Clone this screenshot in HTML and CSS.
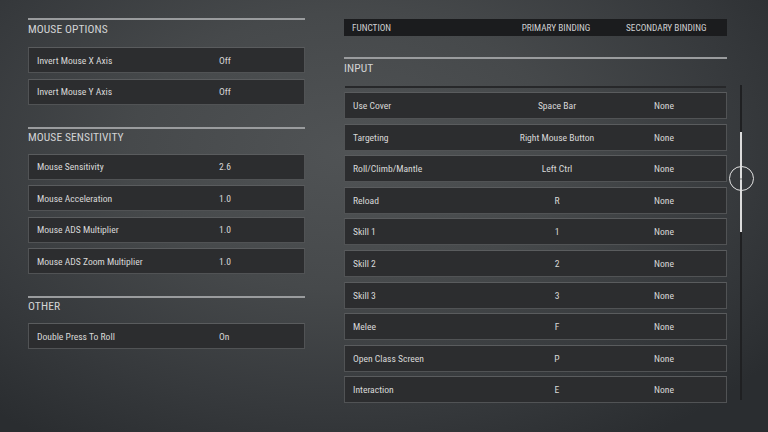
FILE: index.html
```html
<!DOCTYPE html>
<html lang="en">
<head>
<meta charset="utf-8">
<title>Controls</title>
<link rel="stylesheet" href="styles.css">
</head>
<body>
<div class="screen">
  <div class="left">
    <section class="group first">
      <h2 class="group-title">MOUSE OPTIONS</h2>
      <div class="rows">
        <div class="opt"><span>Invert Mouse X Axis</span><span>Off</span></div>
        <div class="opt"><span>Invert Mouse Y Axis</span><span>Off</span></div>
      </div>
    </section>
    <section class="group">
      <h2 class="group-title">MOUSE SENSITIVITY</h2>
      <div class="rows">
        <div class="opt"><span>Mouse Sensitivity</span><span>2.6</span></div>
        <div class="opt"><span>Mouse Acceleration</span><span>1.0</span></div>
        <div class="opt"><span>Mouse ADS Multiplier</span><span>1.0</span></div>
        <div class="opt"><span>Mouse ADS Zoom Multiplier</span><span>1.0</span></div>
      </div>
    </section>
    <section class="group">
      <h2 class="group-title">OTHER</h2>
      <div class="rows">
        <div class="opt"><span>Double Press To Roll</span><span>On</span></div>
      </div>
    </section>
  </div>

  <div class="right">
    <div class="table-head">
      <span class="c1">FUNCTION</span>
      <span class="c2">PRIMARY BINDING</span>
      <span class="c3">SECONDARY BINDING</span>
    </div>
    <section class="group bind-group">
      <h2 class="group-title">INPUT</h2>
      <div class="bind-list">
        <div class="bind"><span class="c1">Use Cover</span><span class="c2">Space Bar</span><span class="c3">None</span></div>
        <div class="bind"><span class="c1">Targeting</span><span class="c2">Right Mouse Button</span><span class="c3">None</span></div>
        <div class="bind"><span class="c1">Roll/Climb/Mantle</span><span class="c2">Left Ctrl</span><span class="c3">None</span></div>
        <div class="bind"><span class="c1">Reload</span><span class="c2">R</span><span class="c3">None</span></div>
        <div class="bind"><span class="c1">Skill 1</span><span class="c2">1</span><span class="c3">None</span></div>
        <div class="bind"><span class="c1">Skill 2</span><span class="c2">2</span><span class="c3">None</span></div>
        <div class="bind"><span class="c1">Skill 3</span><span class="c2">3</span><span class="c3">None</span></div>
        <div class="bind"><span class="c1">Melee</span><span class="c2">F</span><span class="c3">None</span></div>
        <div class="bind"><span class="c1">Open Class Screen</span><span class="c2">P</span><span class="c3">None</span></div>
        <div class="bind"><span class="c1">Interaction</span><span class="c2">E</span><span class="c3">None</span></div>
      </div>
    </section>
  </div>

  <div class="scrollbar">
    <div class="track-top"></div>
    <div class="thumb"></div>
    <div class="track-bottom"></div>
    <div class="knob"><span class="dot"></span></div>
  </div>
</div>
</body>
</html>
```

FILE: styles.css
```css
* { box-sizing: border-box; }

html, body {
  margin: 0;
  padding: 0;
  width: 768px;
  height: 432px;
  overflow: hidden;
}

body {
  font-family: "Liberation Sans Narrow", "Roboto Condensed", "DejaVu Sans Condensed", "Liberation Sans", sans-serif;
  color: #d6d6d6;
  background:
    radial-gradient(ellipse 70% 80% at 45% 35%, #505355 0%, #46494b 40%, #36393c 75%, #2a2d30 100%);
}

.screen {
  display: flex;
  align-items: flex-start;
  padding: 18px 0 0 28px;
  height: 432px;
}

/* ---------- left column ---------- */
.left {
  width: 277px;
  display: flex;
  flex-direction: column;
  gap: 22px;
}

.group {
  border-top: 2px solid #9a9c9e;
}

.group-title {
  margin: 0 0 9px 0;
  font-size: 11.5px;
  font-weight: normal;
  line-height: 16px;
  color: #d2d3d4;
  letter-spacing: 0.1px;
}

.first .group-title {
  line-height: 18px;
}

.rows {
  display: flex;
  flex-direction: column;
  gap: 5.5px;
}

.opt {
  height: 26px;
  display: grid;
  grid-template-columns: 182px 1fr;
  align-items: center;
  padding-left: 8px;
  background: #2c2d2f;
  border: 1px solid #515355;
  border-top-color: #5a5c5e;
  font-size: 9.6px;
  color: #d8d8d8;
}

/* ---------- right column ---------- */
.right {
  width: 383px;
  margin-left: 39px;
  margin-top: 1px;
  display: flex;
  flex-direction: column;
}

.table-head {
  height: 17px;
  background: #1b1c1e;
  display: grid;
  grid-template-columns: 142px 140px 74px 1fr;
  align-items: center;
  font-size: 9.3px;
  color: #cfd0d1;
}

.c1 { padding-left: 8px; }
.c2, .c3 { text-align: center; white-space: nowrap; }

.bind-group {
  margin-top: 21px;
}

.bind-group .group-title {
  line-height: 18px;
  margin-bottom: 9px;
}

.bind-list {
  border-top: 2px solid #27282a;
  margin: 0 1px;
  padding-top: 4px;
  display: flex;
  flex-direction: column;
  gap: 4.6px;
}

.bind {
  height: 27px;
  margin: 0 -1px;
  display: grid;
  grid-template-columns: 142px 140px 74px 1fr;
  align-items: center;
  background: #2c2d2f;
  border: 1px solid #515355;
  border-top-color: #5a5c5e;
  font-size: 9.6px;
  color: #d8d8d8;
}

/* ---------- scrollbar ---------- */
.scrollbar {
  position: relative;
  margin-left: 13px;
  margin-top: 67px;
  width: 2px;
  display: flex;
  flex-direction: column;
}

.track-top {
  height: 47px;
  background: #1f2022;
}

.thumb {
  height: 100px;
  background: #dcdcdc;
}

.track-bottom {
  height: 168px;
  background: #1f2022;
}

.knob {
  position: absolute;
  left: -11.5px;
  top: 81px;
  width: 25px;
  height: 25px;
  border: 1.5px solid #e2e2e2;
  border-radius: 50%;
  display: flex;
  align-items: center;
  justify-content: center;
}

.dot {
  width: 2px;
  height: 2px;
  background: #9a9a9a;
  border-radius: 50%;
}
```
